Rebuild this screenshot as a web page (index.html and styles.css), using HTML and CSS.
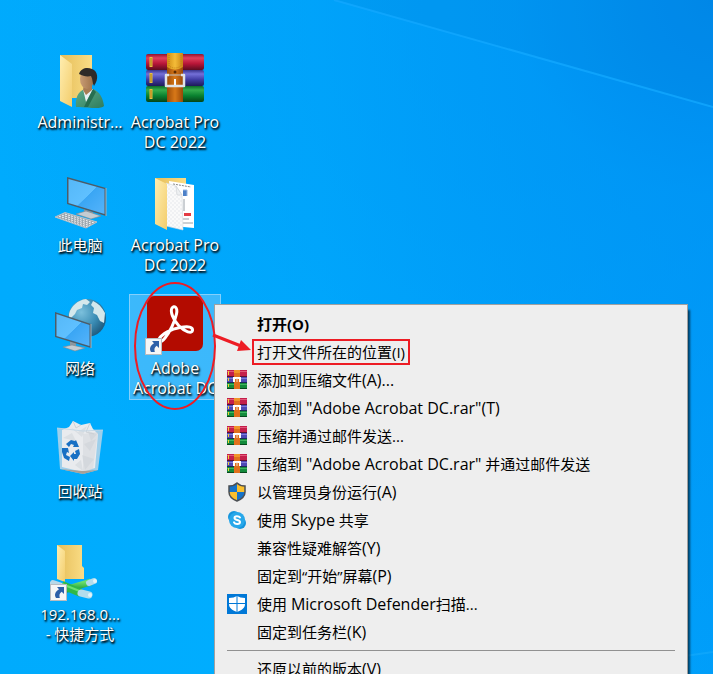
FILE: index.html
```
<!DOCTYPE html>
<html lang="zh-CN">
<head>
    <meta charset="UTF-8">
    <meta name="viewport" content="width=device-width, initial-scale=1.0">
    <title>桌面</title>
    <link rel="stylesheet" href="styles.css">
</head>
<body>

    <!-- Shared icon parts -->
    <svg class="sprite" aria-hidden="true">
        <defs>
            <linearGradient id="gFlap" x1="0" y1="0" x2="1" y2="1"><stop offset="0" stop-color="#ffeeb0"/><stop offset="1" stop-color="#f3cd6c"/></linearGradient>
            <linearGradient id="gBack" x1="0" y1="0" x2="1" y2="0"><stop offset="0" stop-color="#e5bd58"/><stop offset="1" stop-color="#fadd86"/></linearGradient>
            <linearGradient id="gScreen" x1="0" y1="0" x2="1" y2="1"><stop offset="0" stop-color="#55b8f8"/><stop offset=".5" stop-color="#5fc0ff"/><stop offset=".51" stop-color="#3aa6f4"/><stop offset="1" stop-color="#55b4fb"/></linearGradient>
            <linearGradient id="gRed" x1="0" y1="0" x2="0" y2="1"><stop offset="0" stop-color="#8e1530"/><stop offset=".25" stop-color="#e0405c"/><stop offset=".6" stop-color="#b81638"/><stop offset="1" stop-color="#5c0c20"/></linearGradient>
            <linearGradient id="gBlue" x1="0" y1="0" x2="0" y2="1"><stop offset="0" stop-color="#38348c"/><stop offset=".25" stop-color="#7470d8"/><stop offset=".6" stop-color="#403ca4"/><stop offset="1" stop-color="#1d1a58"/></linearGradient>
            <linearGradient id="gGreen" x1="0" y1="0" x2="0" y2="1"><stop offset="0" stop-color="#0c6a28"/><stop offset=".25" stop-color="#34ac4c"/><stop offset=".6" stop-color="#0a8230"/><stop offset="1" stop-color="#064418"/></linearGradient>
            <linearGradient id="gStrap" x1="0" y1="0" x2="1" y2="0"><stop offset="0" stop-color="#9c4c08"/><stop offset=".5" stop-color="#d87818"/><stop offset="1" stop-color="#984808"/></linearGradient>
            <linearGradient id="gStrapTop" x1="0" y1="0" x2="1" y2="0"><stop offset="0" stop-color="#d08c14"/><stop offset=".5" stop-color="#f4bc38"/><stop offset="1" stop-color="#c88414"/></linearGradient>
            <radialGradient id="gGlobe" cx=".35" cy=".35" r=".7"><stop offset="0" stop-color="#7cc0dc"/><stop offset=".6" stop-color="#3a8cb4"/><stop offset="1" stop-color="#205c80"/></radialGradient>
            <linearGradient id="gCoat" x1="0" y1="0" x2="1" y2="1"><stop offset="0" stop-color="#5cac8c"/><stop offset="1" stop-color="#2f7c5c"/></linearGradient>
            <linearGradient id="gSkin" x1="0" y1="0" x2="1" y2="0"><stop offset="0" stop-color="#c89c74"/><stop offset="1" stop-color="#9c7048"/></linearGradient>
            <linearGradient id="gPipe" x1="0" y1="0" x2="0" y2="1"><stop offset="0" stop-color="#6ce06c"/><stop offset="1" stop-color="#1c9c34"/></linearGradient>
            <pattern id="keys" width="3" height="2" patternUnits="userSpaceOnUse" patternTransform="skewY(17)"><rect width="3" height="2" fill="#9aa4ac"/><rect width="2" height="1" fill="#f4f6f8"/></pattern>
            <pattern id="mesh" width="4" height="4" patternUnits="userSpaceOnUse"><rect width="4" height="4" fill="#fafafa"/><path d="M0 0l4 4M4 0L0 4" stroke="#e6e9ec" stroke-width=".5"/></pattern>
        </defs>

        <symbol id="shortcut" viewBox="0 0 17 17">
            <rect x=".5" y=".5" width="16" height="16" fill="#f6f6f6" stroke="#b8bcc0"/>
            <path d="M7 3h7v7l-2.300-2.300C9.500 9.300 9 11 9.800 14H6C4 10.800 5 7.800 9 5.200z" fill="#2c5fa8"/>
        </symbol>

        <symbol id="winrar-small" viewBox="0 0 20 20">
            <rect width="20" height="6" fill="#c41f4a"/>
            <rect y="1" width="20" height="1" fill="#e2577a"/>
            <rect y="6" width="20" height="1" fill="#5c1030"/>
            <rect y="7" width="20" height="5" fill="#4c49b4"/>
            <rect y="8" width="20" height="1" fill="#7d7ada"/>
            <rect y="12" width="20" height="1" fill="#1e2a58"/>
            <rect y="13" width="20" height="5" fill="#138a3c"/>
            <rect y="14" width="20" height="1" fill="#3fb45e"/>
            <rect y="18" width="20" height="1" fill="#07481c"/>
            <path d="M1.500 1v4M1.500 8v3M1.500 14v3" stroke="#f2d232"/>
            <rect x="7" width="6" height="19" fill="#e0701c"/>
            <rect x="7" width="6" height="3" fill="#f09428"/>
            <path d="M7 12V8h6v4" fill="none" stroke="#fff" stroke-width="2"/>
            <path d="M10 8v4" stroke="#f0e0d0"/>
        </symbol>
    </svg>

    <main class="desktop">
        <!-- Wallpaper light beams -->
        <svg class="wallpaper" viewBox="0 0 713 674" preserveAspectRatio="xMaxYMin slice" aria-hidden="true">
            <path d="M334 0L713 107V0z" fill="#0070c8" opacity=".12"/>
            <path d="M334 0L713 107" stroke="#12a8ff" stroke-width="2" opacity=".8"/>
            <path d="M600 668L713 652" stroke="#2cb8ff" stroke-width="2" opacity=".3"/>
        </svg>

        <!-- Desktop Icons -->
        <ul class="icon-grid">
            <li>
                <a class="shortcut" href="#">
                    <svg class="shortcut-icon" viewBox="0 0 60 60">
                        <path d="M10 5H42V48H20z" fill="url(#gBack)"/>
                        <path d="M10 5L22 14V57L10 51z" fill="url(#gFlap)"/>
                        <path d="M26 57C25 48 28 41 35 39h8c7 3 10 9 11 17-3 3-10 2-28 1z" fill="url(#gCoat)"/>
                        <path d="M33 39l3 13 7-13z" fill="#e8f0f4"/>
                        <path d="M34 34h8v6l-6 5-3-5z" fill="#a87c54"/>
                        <path d="M43 39l-9 18h4l8-15z" fill="#276e50"/>
                        <ellipse cx="37" cy="29" rx="7" ry="10" fill="url(#gSkin)"/>
                        <path d="M29 24c2-6 8-7 13-5 6 2 7 10 2 17-2-3-1-7-3-10-4 1-8 0-12-2z" fill="#2e2a28"/>
                    </svg>
                    <span class="shortcut-label" lang="en">Administr...</span>
                </a>
            </li>
            <li>
                <a class="shortcut" href="#">
                    <svg class="shortcut-icon" viewBox="0 0 60 60">
                        <rect x="1" y="4" width="58" height="16" rx="2" fill="url(#gRed)"/>
                        <rect x="1" y="20" width="58" height="16" rx="2" fill="url(#gBlue)"/>
                        <rect x="1" y="36" width="58" height="16" rx="2" fill="url(#gGreen)"/>
                        <path d="M6 7v10M6 23v10M6 39v10" stroke="#e8c040" stroke-width="3"/>
                        <path d="M6 8v8M6 24v8M6 40v8" stroke="#a87c18"/>
                        <rect x="22" y="3" width="16" height="49" fill="url(#gStrap)"/>
                        <path d="M22 3h16v14q-8 5-16 0z" fill="url(#gStrapTop)"/>
                        <path d="M24 5v11q6 4 12 0V5" fill="none" stroke="#b87414" stroke-width=".8" stroke-dasharray="1 1"/>
                        <circle cx="30" cy="22" r="1.500" fill="#5c2c04"/>
                        <path d="M24 25h-3v11h18V25h-3" fill="none" stroke="#dfe3e8" stroke-width="2.500" stroke-linejoin="round"/>
                        <path d="M24 25h12" stroke="#c0c4c8"/>
                        <path d="M30 29v6" stroke="#f8f8f8" stroke-width="2"/>
                    </svg>
                    <span class="shortcut-label" lang="en">Acrobat Pro DC 2022</span>
                </a>
            </li>
            <li>
                <a class="shortcut" href="#">
                    <svg class="shortcut-icon" viewBox="0 0 60 60">
                        <path d="M34 36l9 3v4l-9-1z" fill="#8c98a0"/>
                        <path d="M26 41l10-3 15 5-10 3z" fill="#c4ccd2" stroke="#7c8890" stroke-width=".6"/>
                        <path d="M17 4L56 15V43L17 31z" fill="#4c5c68"/>
                        <path d="M18.500 6L54.500 16V41L18.500 30z" fill="url(#gScreen)"/>
                        <path d="M56 15v28" stroke="#a8b4bc"/>
                        <path d="M5 44L15 39.500 47 49 36 55z" fill="url(#keys)" stroke="#b8c0c8"/>
                    </svg>
                    <span class="shortcut-label">此电脑</span>
                </a>
            </li>
            <li>
                <a class="shortcut" href="#">
                    <svg class="shortcut-icon" viewBox="0 0 60 60">
                        <path d="M10 5H41V50H20z" fill="url(#gBack)"/>
                        <path d="M24 8L49 12V55L28 53z" fill="#fff"/>
                        <path d="M28 11l18 3" stroke="#888" stroke-dasharray="2 1"/>
                        <rect x="38" y="17" width="4" height="6" fill="#4c80c8"/>
                        <path d="M38 17h4v6" fill="none" stroke="#9cb8e0"/>
                        <path d="M39 43h7v-3h-7z" fill="#e43c44"/>
                        <path d="M38 46h6M38 50h10M39 26v12" stroke="#98a0a8"/>
                        <path d="M21 10L31 13 37 22 38 57 21 53z" fill="url(#mesh)" stroke="#d4d8dc" stroke-width=".6"/>
                        <path d="M31 13l1 9h5z" fill="#eef0f2" stroke="#c4c8cc" stroke-width=".5"/>
                        <path d="M10 5L22 11V57L10 51z" fill="url(#gFlap)"/>
                    </svg>
                    <span class="shortcut-label" lang="en">Acrobat Pro DC 2022</span>
                </a>
            </li>
            <li>
                <a class="shortcut" href="#">
                    <svg class="shortcut-icon" viewBox="0 0 60 60">
                        <circle cx="37" cy="22" r="19" fill="url(#gGlobe)"/>
                        <path d="M19 18c2-8 9-14 17-15l4 3-3 3-4-1-1 4-5 2-2 4-4 4 2 4-4 2z" fill="#d4e8ec"/>
                        <path d="M43 5c5 2 9 6 12 12l-1 10-4-2-3-6-4-2 1-5-3-3z" fill="#d4e8ec"/>
                        <path d="M20 45l6 2v5l-6-1z" fill="#8c98a0"/>
                        <path d="M13 51l9-2 13 3-10 3z" fill="#c4ccd2" stroke="#7c8890" stroke-width=".6"/>
                        <path d="M5 16L41 28V52L5 41z" fill="#4c5c68"/>
                        <path d="M6.500 18L39.500 29V50L6.500 40z" fill="url(#gScreen)"/>
                        <path d="M41 28v24" stroke="#a8b4bc"/>
                    </svg>
                    <span class="shortcut-label">网络</span>
                </a>
            </li>
            <li>
                <a class="shortcut selected" href="#">
                    <svg class="shortcut-icon" viewBox="0 0 60 60">
                        <rect x="2" width="56" height="55" rx="7" fill="#b30b00"/>
                        <path d="M14 43C17 38 26 33 35 31.500S48 31 47.500 34.500 40 36 34 30 25 15 27 12s6-1 4.500 6S25 36 20 42s-7 4-6 1z" fill="none" stroke="#fff" stroke-width="3" stroke-linejoin="round"/>
                        <use href="#shortcut" y="42" width="17" height="17"/>
                    </svg>
                    <span class="shortcut-label" lang="en">Adobe<br>Acrobat DC</span>
                </a>
            </li>
            <li>
                <a class="shortcut" href="#">
                    <svg class="shortcut-icon" viewBox="0 0 60 60">
                        <path d="M7 9L53 11 48 51 33 55 10 50z" fill="#c4d8e6" opacity=".8"/>
                        <path d="M12 11l7-3 4-6 8 4 9-2 3 6 5 5-3 34-12 4-21-5z" fill="#e9ebee"/>
                        <path d="M20 8l8 5 9-6-5 11zM38 12l9 3-6 7zM13 19l9-5 4 8zM34 25l12-5-6 12zM32 36l12 4-9 11zM25 46l6-5 2 11z" fill="#dbdfe3"/>
                        <path d="M23 2l3 7 5-3M40 4l-4 9 8 2" fill="none" stroke="#cdd2d7"/>
                        <path d="M33 15l15-2-5 37-10 4z" fill="#c8ccd0" opacity=".35"/>
                        <path d="M7 9l26 3 20-1" fill="none" stroke="#bcd4e4" stroke-width=".8"/>
                        <path d="M10 50l23 5 15-4-15 1z" fill="#a8a098"/>
                        <path d="M16 25l5-4 4 1 1-1 3 7-6 0 1-2-3-1-2 3zM12 29l6 0 1 5-2-1-1 3 4 2-1 4-5-3-2-6zM29 30l1 5-3 5-3 0 0 2-4-5 4-4 0 2 2 0-1-3z" fill="#1870c4"/>
                    </svg>
                    <span class="shortcut-label">回收站</span>
                </a>
            </li>
            <li></li>
            <li>
                <a class="shortcut" href="#">
                    <svg class="shortcut-icon" viewBox="0 0 60 60">
                        <path d="M7 3H32V24l2 2V37H15z" fill="url(#gBack)"/>
                        <path d="M7 3L15 9V40L7 37z" fill="url(#gFlap)"/>
                        <path d="M3 41l12 4" stroke="#b8d8e8" stroke-width="6" stroke-linecap="round"/>
                        <path d="M14 48l27-8" stroke="url(#gPipe)" stroke-width="7"/>
                        <path d="M12 43l19 8" stroke="#30b848" stroke-width="8"/>
                        <path d="M12 42l20 8" stroke="#6ce070" stroke-width="2"/>
                        <path d="M39 41l5-2" stroke="#b4dcec" stroke-width="6" stroke-linecap="round"/>
                        <path d="M31 51l8 2" stroke="#b4dcec" stroke-width="7" stroke-linecap="round"/>
                        <circle cx="45" cy="39" r="2" fill="#e4f4fa"/>
                        <circle cx="40" cy="53" r="2" fill="#e4f4fa"/>
                        <use href="#shortcut" y="42" width="17" height="17"/>
                    </svg>
                    <span class="shortcut-label">192.168.0...<br>- 快捷方式</span>
                </a>
            </li>
        </ul>

        <!-- Context Menu -->
        <div class="context-menu" role="menu">
            <button class="menu-item default" role="menuitem"><span class="menu-icon"></span><span>打开(O)</span></button>
            <button class="menu-item" role="menuitem"><span class="menu-icon"></span><span class="highlight">打开文件所在的位置(I)</span></button>
            <button class="menu-item" role="menuitem"><svg class="menu-icon"><use href="#winrar-small"/></svg><span>添加到压缩文件<span lang="en">(A)...</span></span></button>
            <button class="menu-item" role="menuitem"><svg class="menu-icon"><use href="#winrar-small"/></svg><span>添加到 <span lang="en">"Adobe Acrobat DC.rar"(T)</span></span></button>
            <button class="menu-item" role="menuitem"><svg class="menu-icon"><use href="#winrar-small"/></svg><span>压缩并通过邮件发送...</span></button>
            <button class="menu-item" role="menuitem"><svg class="menu-icon"><use href="#winrar-small"/></svg><span>压缩到 <span lang="en">"Adobe Acrobat DC.rar"</span> 并通过邮件发送</span></button>
            <button class="menu-item" role="menuitem">
                <svg class="menu-icon" viewBox="0 0 20 20">
                    <path d="M10 1v9H2V4q5 0 8-3z" fill="#1673c8"/>
                    <path d="M10 1v9h8V4q-5 0-8-3z" fill="#fbc02c"/>
                    <path d="M2 10h8v9C5 17 2 14 2 10z" fill="#fbc02c"/>
                    <path d="M18 10h-8v9c5-2 8-5 8-9z" fill="#1673c8"/>
                    <path d="M10 1q3 3 8 3v6c0 4-3 7-8 9-5-2-8-5-8-9V4q5 0 8-3z" fill="none" stroke="#4c5054" stroke-width="1.500"/>
                </svg>
                <span>以管理员身份运行<span lang="en">(A)</span></span>
            </button>
            <button class="menu-item" role="menuitem">
                <svg class="menu-icon" viewBox="0 0 20 20">
                    <circle cx="7" cy="7" r="6" fill="#1494dc"/>
                    <circle cx="13" cy="13" r="6" fill="#1494dc"/>
                    <circle cx="10" cy="10" r="8" fill="#28a8ea"/>
                    <path d="M13 7.500C12 5.800 7.500 5.500 7.500 7.900c0 2.600 5.500 1.500 5.500 4.100 0 2.500-5 2.500-6 .3" fill="none" stroke="#fff" stroke-width="2" stroke-linecap="round"/>
                </svg>
                <span>使用 <span lang="en">Skype</span> 共享</span>
            </button>
            <button class="menu-item" role="menuitem"><span class="menu-icon"></span><span>兼容性疑难解答<span lang="en">(Y)</span></span></button>
            <button class="menu-item" role="menuitem"><span class="menu-icon"></span><span>固定到“开始”屏幕<span lang="en">(P)</span></span></button>
            <button class="menu-item" role="menuitem">
                <svg class="menu-icon" viewBox="0 0 20 20">
                    <rect width="20" height="20" fill="#0078d7"/>
                    <path d="M10 2q3 2 8 2v6c0 4-3 6-8 8-5-2-8-4-8-8V4q5 0 8-2z" fill="#fff"/>
                    <path d="M10 2v16M2 9.500h16" stroke="#0078d7"/>
                </svg>
                <span>使用 <span lang="en">Microsoft Defender</span>扫描...</span>
            </button>
            <button class="menu-item" role="menuitem"><span class="menu-icon"></span><span>固定到任务栏<span lang="en">(K)</span></span></button>
            <hr class="menu-separator">
            <button class="menu-item" role="menuitem"><span class="menu-icon"></span><span>还原以前的版本<span lang="en">(V)</span></span></button>
        </div>

        <!-- Red circle and arrow -->
        <svg class="marker" viewBox="0 0 124 130" aria-hidden="true">
            <ellipse cx="45" cy="65" rx="40" ry="63" fill="none" stroke="#ed1c24" stroke-width="2"/>
            <path d="M83 54l28 11" stroke="#ed1c24" stroke-width="3"/>
            <path d="M121 69l-14 1 4-11z" fill="#ed1c24"/>
        </svg>
    </main>

</body>
</html>
```
FILE: styles.css
```
/* General Styles */
* {
    box-sizing: border-box;
}

body {
    margin: 0;
    font-family: "Open Sans", "Noto Sans CJK SC", sans-serif;
    font-size: 15px;
    line-height: 20px;
    color: #000;
}

/* Latin names run a little larger than the Chinese text */
[lang="en"] {
    font-size: 16px;
}

.sprite {
    position: absolute;
    width: 0;
    height: 0;
}

/* Desktop */
.desktop {
    position: relative;
    height: 100vh;
    overflow: hidden;
    background:
        radial-gradient(circle at 100% 0, #008aec 0, rgba(0, 144, 242, 0.6) 20%, rgba(0, 156, 250, 0) 75%),
        linear-gradient(to right, #00abfd 0, #00aeff 45%, #009ffa 100%);
}

.wallpaper {
    position: absolute;
    top: 0;
    left: 0;
    width: 100%;
    height: 100%;
}

/* Desktop Icons */
.icon-grid {
    position: relative;
    display: grid;
    grid-template-columns: 92px 92px;
    grid-auto-rows: 106px;
    gap: 17px 3px;
    margin: 0;
    padding: 48px 34px;
    list-style: none;
}

.shortcut {
    display: flex;
    flex-direction: column;
    align-items: center;
    height: 100%;
    padding-top: 2px;
    color: #fff;
    text-align: center;
    text-decoration: none;
}

.shortcut.selected {
    background-color: rgba(120, 200, 250, 0.5);
    box-shadow: inset 0 0 0 1px rgba(150, 214, 252, 0.8);
}

.shortcut-icon {
    flex: none;
    width: 60px;
    height: 60px;
    margin-bottom: 2px;
}

.shortcut-label {
    text-shadow: 1px 1px 2px #000, 1px 2px 2px rgba(0, 0, 0, 0.8);
}

/* Context Menu */
.context-menu {
    position: absolute;
    top: 304px;
    left: 214px;
    right: 25px;
    padding: 5px 0;
    background-color: #eee;
    border: 1px solid #a0a0a0;
    box-shadow: 3px 5px 2px -1px rgba(0, 0, 0, 0.6);
}

.menu-item {
    display: flex;
    align-items: center;
    gap: 10px;
    width: 100%;
    height: 28px;
    padding: 0 12px;
    border: none;
    background: none;
    color: inherit;
    font: inherit;
    text-align: left;
    white-space: nowrap;
}

.menu-item:hover {
    background-color: #fff;
}

.menu-item.default {
    font-weight: 700;
}

.menu-icon {
    flex: none;
    width: 20px;
    height: 20px;
}

.menu-separator {
    margin: 4px 12px;
    border: none;
    border-top: 1px solid #919191;
}

/* Markers */
.highlight {
    line-height: 16px;
    outline: 2px solid #ed1c24;
    outline-offset: 3px;
}

.marker {
    position: absolute;
    top: 281px;
    left: 130px;
    width: 124px;
    height: 130px;
    pointer-events: none;
}
```
